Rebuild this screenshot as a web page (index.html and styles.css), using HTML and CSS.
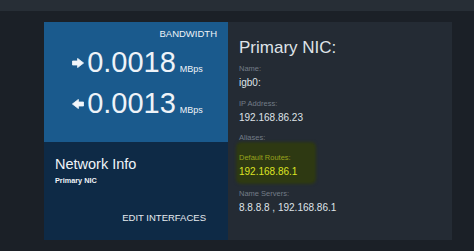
FILE: index.html
```html
<!DOCTYPE html>
<html lang="en">
  <head>
    <meta charset="UTF-8" />
    <title>Network Info</title>
    <link rel="stylesheet" href="styles.css">
  </head>
  <body>
    <div class="topbar"></div>
    <div class="page">
      <div class="card">
        <div class="left">
          <div class="bandwidth">
            <div class="bw-title">BANDWIDTH</div>
            <div class="bw-row">
              <svg class="arrow" width="12" height="10" viewBox="0 0 12 10">
                <path d="M0.5 3H5.6V0.4L11.6 5L5.6 9.6V7H0.5Z" fill="#f2f6fa" stroke="#f2f6fa" stroke-width="0.8" stroke-linejoin="round" />
              </svg><span class="value">0.0018</span><span class="unit">MBps</span>
            </div>
            <div class="bw-row">
              <svg class="arrow" width="12" height="10" viewBox="0 0 12 10">
                <path d="M11.5 3H6.4V0.4L0.4 5L6.4 9.6V7H11.5Z" fill="#f2f6fa" stroke="#f2f6fa" stroke-width="0.8" stroke-linejoin="round" />
              </svg><span class="value">0.0013</span><span class="unit">MBps</span>
            </div>
          </div>
          <div class="info">
            <h2>Network Info</h2>
            <p class="sub">Primary NIC</p>
            <a class="edit" href="#">EDIT INTERFACES</a>
          </div>
        </div>
        <div class="right">
          <h1>Primary NIC:</h1>
          <div class="field">
            <div class="label">Name:</div>
            <div class="val">igb0:</div>
          </div>
          <div class="field">
            <div class="label">IP Address:</div>
            <div class="val">192.168.86.23</div>
          </div>
          <div class="field">
            <div class="label">Aliases:</div>
          </div>
          <div class="field highlight">
            <div class="label">Default Routes:</div>
            <div class="val">192.168.86.1</div>
          </div>
          <div class="field">
            <div class="label">Name Servers:</div>
            <div class="val">8.8.8.8 , 192.168.86.1</div>
          </div>
        </div>
      </div>
    </div>
  </body>
</html>
```

FILE: styles.css
```css
* {
  box-sizing: border-box;
  margin: 0;
  padding: 0;
  font-family: "Liberation Sans", Arial, sans-serif;
}

body {
  background-color: #1b2027;
  width: 474px;
  height: 251px;
  overflow: hidden;
}

.topbar {
  height: 11px;
  background-color: #272e36;
}

.page {
  padding: 11px 0 0 44px;
}

.card {
  display: flex;
  height: 218px;
}

/* left column */
.left {
  width: 184px;
  display: flex;
  flex-direction: column;
}

.bandwidth {
  height: 120px;
  background-color: #1a5a8d;
  color: #eef3f8;
  padding: 6px 11px 0 0;
}

.bw-title {
  text-align: right;
  font-size: 9.5px;
  line-height: 12px;
  margin-bottom: 1.5px;
}

.bw-row {
  text-align: center;
  padding-left: 14px;
  height: 41px;
  line-height: 41px;
  white-space: nowrap;
}

.arrow {
  vertical-align: 4px;
  margin-right: 3px;
}

.value {
  font-size: 29px;
}

.unit {
  font-size: 9px;
  margin-left: 4px;
}

.info {
  flex: 1;
  background-color: #0e2a46;
  color: #f0f4f8;
  padding: 13.5px 0 0 11px;
  display: flex;
  flex-direction: column;
}

.info h2 {
  font-size: 14.5px;
  font-weight: normal;
  line-height: 17px;
}

.sub {
  font-size: 7.3px;
  font-weight: bold;
  line-height: 9px;
  margin-top: 3px;
}

.edit {
  color: #e6ebf0;
  text-decoration: none;
  font-size: 9.5px;
  line-height: 11px;
  align-self: flex-end;
  margin: 27px 22px 0 0;
}

/* right column */
.right {
  width: 224px;
  background-color: #242b34;
  padding: 16px 0 0 11px;
  color: #dfe3e8;
}

.right h1 {
  font-size: 17px;
  font-weight: normal;
  line-height: 20px;
  margin-bottom: 6px;
}

.field {
  margin-bottom: 9.5px;
}

.label {
  font-size: 7.5px;
  color: #737c87;
  line-height: 10px;
  margin-bottom: 2px;
}

.val {
  font-size: 10px;
  line-height: 13px;
}

.highlight {
  margin: -8.5px 0 7px -1px;
  padding: 9px 0 3.5px 1px;
  width: 76px;
  background-color: #2e3912;
  box-shadow: 0 0 3px 2px #2e3912;
  border-radius: 3px;
}

.highlight .label {
  color: #98a21c;
}

.highlight .val {
  color: #dde323;
}
```
